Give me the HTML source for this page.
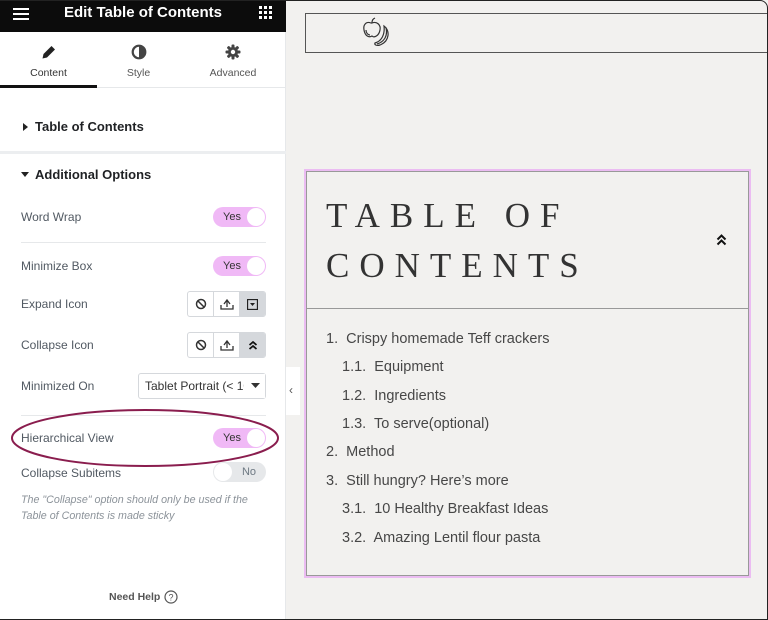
<!DOCTYPE html>
<html><head><meta charset="utf-8"><style>
*{margin:0;padding:0;box-sizing:border-box}
body{width:768px;height:620px;overflow:hidden;background:#f2f1ef;font-family:"Liberation Sans",sans-serif;position:relative}
.a{position:absolute}
#frame{position:absolute;left:0;top:0;width:768px;height:620px;border:1px solid #222;border-left:none;border-top-right-radius:8px;pointer-events:none}
#panel{left:0;top:0;width:286px;height:620px;background:#fff;border-right:1px solid #e6e8ea}
.hdr{left:0;top:0;width:286px;height:32px;background:#0c0c0c;color:#fff;font-weight:bold;font-size:15px;text-align:center;line-height:25px}
.lbl{font-size:12px;color:#515962;left:21px}
.tog{width:53px;height:20px;border-radius:10px;background:#f0b9f6;left:213px}
.tog span{position:absolute;left:10px;top:4px;font-size:11px;line-height:12px;color:#333}
.tog i{position:absolute;right:1px;top:1px;width:18px;height:18px;border-radius:50%;background:#fff}
.off{background:#e6e8ea}
.off i{left:1px;right:auto}
.off span{left:auto;right:10px;color:#6d7882}
.grp{left:187px;width:79px;height:26px;border:1px solid #d5d8dc;border-radius:3px;display:flex;overflow:hidden}
.grp div{flex:1;border-right:1px solid #d5d8dc;display:flex;align-items:center;justify-content:center}
.grp div:last-child{border:none;background:#d5d8dc}
.sep{left:21px;width:245px;height:1px;background:#e6e8ea}
.toc{font-family:"Liberation Sans",sans-serif;font-size:14.5px;color:#474747;left:326px}
.ttl{font-family:"Liberation Serif",serif;font-size:35px;letter-spacing:10px;color:#333;left:326px}
</style></head><body>
<div id="panel" class="a"></div>
<div class="a hdr">Edit Table of Contents</div>
<svg class="a" style="left:13px;top:7px" width="16" height="14"><rect y="1" width="16" height="2" fill="#fff"/><rect y="6" width="16" height="2" fill="#fff"/><rect y="11" width="16" height="2" fill="#fff"/></svg>
<svg class="a" style="left:259px;top:6px" width="14" height="14" fill="#fff"><rect x="0" y="0" width="3" height="3"/><rect x="5" y="0" width="3" height="3"/><rect x="10" y="0" width="3" height="3"/><rect x="0" y="5" width="3" height="3"/><rect x="5" y="5" width="3" height="3"/><rect x="10" y="5" width="3" height="3"/><rect x="0" y="10" width="3" height="3"/><rect x="5" y="10" width="3" height="3"/><rect x="10" y="10" width="3" height="3"/></svg>
<!-- tabs -->
<svg class="a" style="left:41px;top:44px" width="16" height="16"><path d="M1.5 14.5 L2.5 10 L10.5 2 L14 5.5 L6 13.5 Z" fill="#222"/></svg>
<div class="a" style="left:0;top:67px;width:97px;text-align:center;font-size:10.5px;color:#333">Content</div>
<div class="a" style="left:0;top:85px;width:97px;height:3px;background:#111"></div>
<svg class="a" style="left:131px;top:44px" width="16" height="16"><circle cx="8" cy="8" r="6.3" fill="none" stroke="#444" stroke-width="2.2"/><path d="M8 1.7 A6.3 6.3 0 0 1 8 14.3Z" fill="#444"/></svg>
<div class="a" style="left:97px;top:67px;width:83px;text-align:center;font-size:10.5px;color:#555">Style</div>
<svg class="a" style="left:225px;top:44px" width="16" height="16"><g fill="#444"><circle cx="8" cy="8" r="5"/><rect x="6.5" y="0.5" width="3" height="15" rx="1"/><rect x="0.5" y="6.5" width="15" height="3" rx="1"/><rect x="6.5" y="0.5" width="3" height="15" rx="1" transform="rotate(45 8 8)"/><rect x="6.5" y="0.5" width="3" height="15" rx="1" transform="rotate(-45 8 8)"/></g><circle cx="8" cy="8" r="2.2" fill="#fff"/></svg>
<div class="a" style="left:190px;top:67px;width:86px;text-align:center;font-size:10.5px;color:#555">Advanced</div>
<div class="a" style="left:97px;top:87px;width:189px;height:1px;background:#e6e8ea"></div>
<!-- sections -->
<svg class="a" style="left:23px;top:123px" width="6" height="8"><path d="M0 0 L5 4 L0 8Z" fill="#222"/></svg>
<div class="a" style="left:35px;top:119px;font-size:13px;font-weight:bold;color:#1f2124">Table of Contents</div>
<div class="a" style="left:0;top:151px;width:286px;height:3px;background:#eceef0"></div>
<svg class="a" style="left:21px;top:172px" width="8" height="6"><path d="M0 0 L8 0 L4 5Z" fill="#222"/></svg>
<div class="a" style="left:35px;top:167px;font-size:13px;font-weight:bold;color:#1f2124">Additional Options</div>
<div class="a lbl" style="top:210px">Word Wrap</div>
<div class="a tog" style="top:207px"><span>Yes</span><i></i></div>
<div class="a sep" style="top:242px"></div>
<div class="a lbl" style="top:259px">Minimize Box</div>
<div class="a tog" style="top:256px"><span>Yes</span><i></i></div>
<div class="a lbl" style="top:297px">Expand Icon</div>
<div class="a grp" style="top:291px">
<div><svg width="12" height="12"><circle cx="6" cy="6" r="4.5" fill="none" stroke="#333" stroke-width="1.5"/><path d="M3 3 L9 9" stroke="#333" stroke-width="1.5"/></svg></div>
<div><svg width="14" height="12"><path d="M1 7 V11 H13 V7 M4 6 L7 2 L10 6 M7 2 V9" fill="none" stroke="#333" stroke-width="1.3"/></svg></div>
<div><svg width="11" height="11"><rect x=".5" y=".5" width="10" height="10" fill="none" stroke="#222" stroke-width="1.3"/><path d="M3 4 L8 4 L5.5 7Z" fill="#222"/></svg></div></div>
<div class="a lbl" style="top:338px">Collapse Icon</div>
<div class="a grp" style="top:332px">
<div><svg width="12" height="12"><circle cx="6" cy="6" r="4.5" fill="none" stroke="#333" stroke-width="1.5"/><path d="M3 3 L9 9" stroke="#333" stroke-width="1.5"/></svg></div>
<div><svg width="14" height="12"><path d="M1 7 V11 H13 V7 M4 6 L7 2 L10 6 M7 2 V9" fill="none" stroke="#333" stroke-width="1.3"/></svg></div>
<div><svg width="10" height="10"><path d="M1.5 5 L5 2 L8.5 5 M1.5 9 L5 6 L8.5 9" fill="none" stroke="#111" stroke-width="1.8"/></svg></div></div>
<div class="a lbl" style="top:379px">Minimized On</div>
<div class="a" style="left:138px;top:373px;width:128px;height:26px;border:1px solid #d5d8dc;border-radius:3px;font-size:12px;color:#333;padding:5px 0 0 6px;overflow:hidden;white-space:nowrap">Tablet Portrait (&lt; 10</div>
<div class="a" style="left:244px;top:374px;width:21px;height:24px;background:#fff"></div>
<svg class="a" style="left:251px;top:383px" width="9" height="5"><path d="M0 0 L9 0 L4.5 5Z" fill="#333"/></svg>
<div class="a sep" style="top:415px"></div>
<div class="a lbl" style="top:431px">Hierarchical View</div>
<div class="a tog" style="top:428px"><span>Yes</span><i></i></div>
<div class="a lbl" style="top:466px">Collapse Subitems</div>
<div class="a tog off" style="top:462px"><span>No</span><i></i></div>
<div class="a" style="left:21px;top:492px;font-size:10.7px;font-style:italic;color:#8c939a;line-height:16px">The "Collapse" option should only be used if the<br>Table of Contents is made sticky</div>
<div class="a" style="left:109px;top:591px;font-size:10.5px;font-weight:bold;color:#555">Need Help</div>
<svg class="a" style="left:164px;top:590px" width="14" height="14"><circle cx="7" cy="7" r="6" fill="none" stroke="#555" stroke-width="1.2"/><text x="7" y="10.5" font-size="9" text-anchor="middle" fill="#555" font-family="Liberation Sans">?</text></svg>
<svg class="a" style="left:10px;top:408px" width="272" height="62"><ellipse cx="135" cy="30" rx="133" ry="28" fill="none" stroke="#8a1d4e" stroke-width="2"/></svg>
<!-- collapse tab -->
<div class="a" style="left:286px;top:367px;width:14px;height:48px;background:#fff"></div>
<div class="a" style="left:289px;top:383px;font-size:12px;color:#555">‹</div>
<!-- right -->
<div class="a" style="left:305px;top:13px;width:470px;height:40px;border:1px solid #555"></div>
<svg class="a" style="left:362px;top:17px" width="36" height="32" fill="none" stroke="#333" stroke-width="1.2"><path d="M9 6 C4 4 1 8 2 13 C3 19 7 21 10 19 C12 21 17 19 18 13 C19 8 15 4 10 6 Z"/><path d="M10 6 C10 3 11 2 13 1"/><path d="M4 13 C4 16 6 18 8 18"/><path d="M22 9 C28 13 28 24 18 28 C15 29 12 28 13 26 C20 24 23 17 22 9Z"/><path d="M15 27 C22 25 26 19 24 11"/></svg>
<div class="a" style="left:304px;top:169px;width:447px;height:409px;border:2px solid #ebbcf2"></div>
<div class="a" style="left:306px;top:171px;width:443px;height:405px;border:1px solid #999"></div>
<div class="a" style="left:306px;top:308px;width:443px;height:1px;background:#999"></div>
<div class="a ttl" style="top:196px">TABLE OF</div>
<div class="a ttl" style="top:246px">CONTENTS</div>
<svg class="a" style="left:716px;top:234px" width="11" height="12"><path d="M1.5 5.5 L5.5 1.5 L9.5 5.5 M1.5 10.5 L5.5 6.5 L9.5 10.5" fill="none" stroke="#111" stroke-width="2"/></svg>
<div class="a toc" style="top:331px">1.&nbsp; Crispy homemade Teff crackers</div>
<div class="a toc" style="top:359px;left:342px">1.1.&nbsp; Equipment</div>
<div class="a toc" style="top:388px;left:342px">1.2.&nbsp; Ingredients</div>
<div class="a toc" style="top:416px;left:342px">1.3.&nbsp; To serve(optional)</div>
<div class="a toc" style="top:444px">2.&nbsp; Method</div>
<div class="a toc" style="top:473px">3.&nbsp; Still hungry? Here’s more</div>
<div class="a toc" style="top:501px;left:342px">3.1.&nbsp; 10 Healthy Breakfast Ideas</div>
<div class="a toc" style="top:530px;left:342px">3.2.&nbsp; Amazing Lentil flour pasta</div>
<div id="frame"></div>
</body></html>
